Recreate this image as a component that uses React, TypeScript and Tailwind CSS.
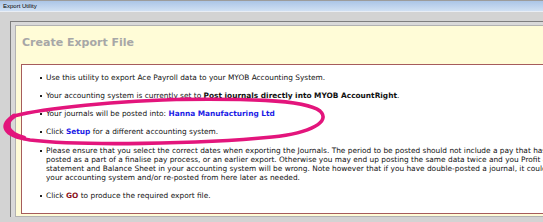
const body = "font-['DejaVu_Sans','Verdana',sans-serif]"

function Bullet({ children }: { children: React.ReactNode }) {
  return (
    <li className="flex items-start">
      <span className="ml-[18px] mt-[4px] h-[2px] w-[2px] shrink-0 bg-[#222]" />
      <span className="ml-[4px] whitespace-nowrap">{children}</span>
    </li>
  )
}

export default function App() {
  return (
    <div className="relative h-[222px] w-[543px] overflow-hidden bg-[#d3d3d3]">
      {/* window title */}
      <div className="flex h-[11px] items-center border-t border-[#9c9c9c] bg-gradient-to-b from-[#abc5e7] to-[#d0e0f3] pl-[3px]">
        <span className="font-['Liberation_Sans',Arial,sans-serif] text-[6px] leading-none text-black">Export Utility</span>
      </div>
      <div className="h-px bg-[#e9eef5]" />

      <div className="pl-[10px] pt-[9px]">
        <div className="w-[640px] border-l border-t border-[#7e7e7e] bg-[#d9d9d9] pl-[4px] pt-[3px]">
          <div className="border-b border-l border-t border-[#b2b2b2] bg-[#fffcd7] pb-[2px] pl-[5px] pt-[10px]">
            <h1 className={`${body} pl-[1px] text-[11px] font-bold leading-[13px] text-[#a7a7a7]`}>Create Export File</h1>

            <div className="mt-[15px] border border-[#a65c5c] bg-white pb-[13px] pt-[7.5px]">
              <ul className={`${body} flex flex-col gap-[9.3px] text-[7.4px] leading-[9px] text-[#111]`}>
                <Bullet>Use this utility to export Ace Payroll data to your MYOB Accounting System.</Bullet>
                <Bullet>
                  Your accounting system is currently set to <b>Post journals directly into MYOB AccountRight</b>.
                </Bullet>
                <Bullet>
                  Your journals will be posted into: <b className="text-[#1c1ce6]">Hanna Manufacturing Ltd</b>
                </Bullet>
                <Bullet>
                  Click <b className="text-[#1c1ce6]">Setup</b> for a different accounting system.
                </Bullet>
                <Bullet>
                  Please ensure that you select the correct dates when exporting the Journals. The period to be posted should not include a pay that has been
                  <br />
                  posted as a part of a finalise pay process, or an earlier export. Otherwise you may end up posting the same data twice and you Profit and Loss
                  <br />
                  statement and Balance Sheet in your accounting system will be wrong. Note however that if you have double-posted a journal, it could be reversed in
                  <br />
                  your accounting system and/or re-posted from here later as needed.
                </Bullet>
                <Bullet>
                  Click <b className="text-[#8a1020]">GO</b> to produce the required export file.
                </Bullet>
              </ul>
            </div>
          </div>
        </div>
      </div>

      {/* hand drawn highlight */}
      <svg className="pointer-events-none absolute left-0 top-0" width="543" height="222" viewBox="0 0 543 222">
        <path
          d="M168 99.5 C240 98.5 305 99 320 111 C331 121 312 133 272 137 C200 144 80 146 30 140 C2 136 -1 124 14 116 C45 108 115 101 190 99"
          fill="none"
          stroke="#e3157c"
          strokeWidth="3.6"
          strokeLinecap="round"
        />
        <path d="M14 116 C5 122 4 132 24 138" fill="none" stroke="#e3157c" strokeWidth="4.6" strokeLinecap="round" />
      </svg>
    </div>
  )
}
